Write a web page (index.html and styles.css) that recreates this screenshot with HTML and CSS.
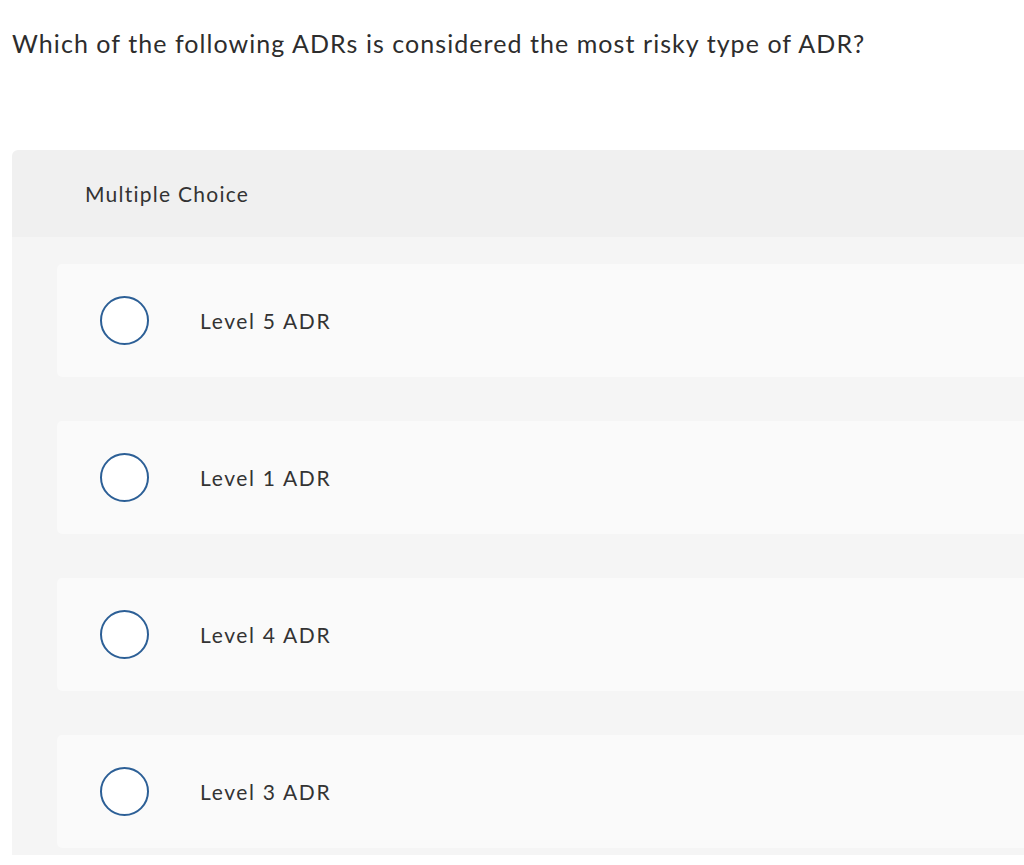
FILE: index.html
```html
<!DOCTYPE html>
<html>
<head>
<meta charset="utf-8">
<link rel="stylesheet" href="styles.css">
</head>
<body>
<div class="page">
  <p class="question">Which of the following ADRs is considered the most risky type of ADR?</p>
  <div class="panel">
    <div class="panel-head">Multiple Choice</div>
    <div class="panel-body">
      <div class="option"><span class="radio"></span><span class="label">Level 5 ADR</span></div>
      <div class="option"><span class="radio"></span><span class="label">Level 1 ADR</span></div>
      <div class="option"><span class="radio"></span><span class="label">Level 4 ADR</span></div>
      <div class="option"><span class="radio"></span><span class="label">Level 3 ADR</span></div>
    </div>
  </div>
</div>
</body>
</html>
```
FILE: styles.css
```css
html, body {
  margin: 0;
  padding: 0;
  background: #ffffff;
}
body {
  font-family: Lato, "Open Sans", sans-serif;
  color: #333333;
  overflow: hidden;
}
.page {
  padding-left: 12px;
  width: 1040px;
}
.question {
  margin: 0;
  padding-top: 27px;
  font-size: 25px;
  letter-spacing: 1.06px;
  line-height: 32px;
  height: 123px;
  color: #2d2d2d;
}
.panel {
  border-radius: 6px 0 0 0;
  overflow: hidden;
}
.panel-head {
  background: #f0f0f0;
  height: 87px;
  display: flex;
  align-items: center;
  padding-left: 73px;
  font-size: 21px;
  letter-spacing: 1.25px;
  color: #333;
}
.panel-body {
  background: #f5f5f5;
  padding: 27px 0 7px 45px;
  display: flex;
  flex-direction: column;
  gap: 44px;
}
.option {
  background: #fafafa;
  border-radius: 5px 0 0 5px;
  height: 113px;
  display: flex;
  align-items: center;
  padding-left: 43px;
}
.radio {
  width: 45px;
  height: 45px;
  border: 2px solid #2c5f96;
  border-radius: 50%;
  background: #ffffff;
  flex: none;
}
.label {
  margin-left: 51px;
  font-size: 21px;
  letter-spacing: 1.65px;
  color: #333;
}
```
